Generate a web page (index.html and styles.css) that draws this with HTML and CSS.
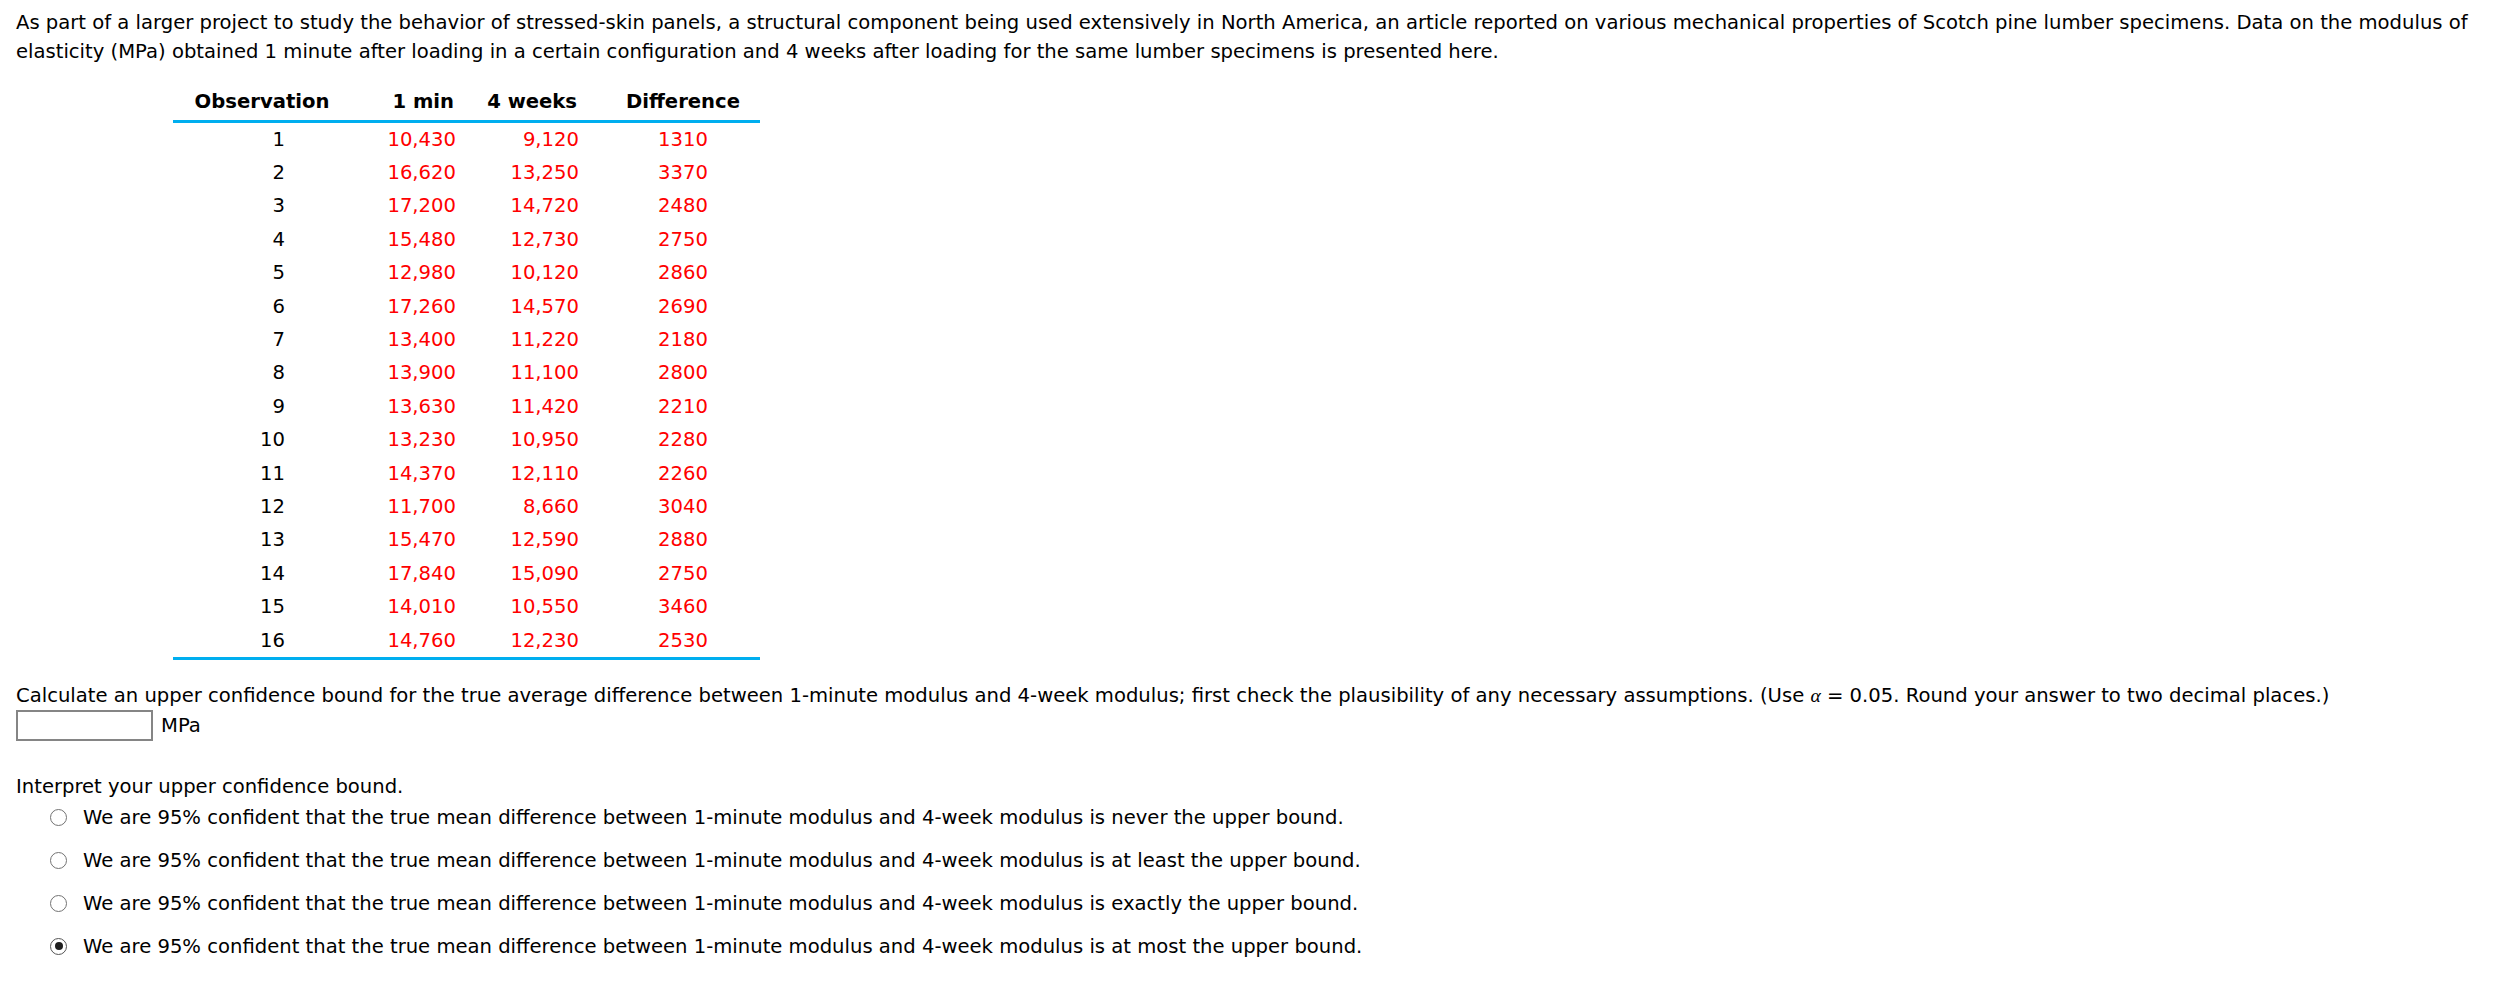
FILE: index.html
```html
<!DOCTYPE html>
<html>
<head>
<meta charset="utf-8">
<link rel="stylesheet" href="styles.css">
</head>
<body>
<div class="page">
  <p class="intro">As part of a larger project to study the behavior of stressed-skin panels, a structural component being used extensively in North America, an article reported on various mechanical properties of Scotch pine lumber specimens. Data on the modulus of elasticity (MPa) obtained 1 minute after loading in a certain configuration and 4 weeks after loading for the same lumber specimens is presented here.</p>

  <table class="data">
    <colgroup>
      <col class="col-obs">
      <col class="col-min">
      <col class="col-wk">
      <col class="col-diff">
    </colgroup>
    <thead>
      <tr>
        <th class="h-obs">Observation</th>
        <th class="h-num">1 min</th>
        <th class="h-num">4 weeks</th>
        <th class="h-diff">Difference</th>
      </tr>
    </thead>
    <tbody>
      <tr><td class="obs">1</td><td class="num">10,430</td><td class="num">9,120</td><td class="diff">1310</td></tr>
      <tr><td class="obs">2</td><td class="num">16,620</td><td class="num">13,250</td><td class="diff">3370</td></tr>
      <tr><td class="obs">3</td><td class="num">17,200</td><td class="num">14,720</td><td class="diff">2480</td></tr>
      <tr><td class="obs">4</td><td class="num">15,480</td><td class="num">12,730</td><td class="diff">2750</td></tr>
      <tr><td class="obs">5</td><td class="num">12,980</td><td class="num">10,120</td><td class="diff">2860</td></tr>
      <tr><td class="obs">6</td><td class="num">17,260</td><td class="num">14,570</td><td class="diff">2690</td></tr>
      <tr><td class="obs">7</td><td class="num">13,400</td><td class="num">11,220</td><td class="diff">2180</td></tr>
      <tr><td class="obs">8</td><td class="num">13,900</td><td class="num">11,100</td><td class="diff">2800</td></tr>
      <tr><td class="obs">9</td><td class="num">13,630</td><td class="num">11,420</td><td class="diff">2210</td></tr>
      <tr><td class="obs">10</td><td class="num">13,230</td><td class="num">10,950</td><td class="diff">2280</td></tr>
      <tr><td class="obs">11</td><td class="num">14,370</td><td class="num">12,110</td><td class="diff">2260</td></tr>
      <tr><td class="obs">12</td><td class="num">11,700</td><td class="num">8,660</td><td class="diff">3040</td></tr>
      <tr><td class="obs">13</td><td class="num">15,470</td><td class="num">12,590</td><td class="diff">2880</td></tr>
      <tr><td class="obs">14</td><td class="num">17,840</td><td class="num">15,090</td><td class="diff">2750</td></tr>
      <tr><td class="obs">15</td><td class="num">14,010</td><td class="num">10,550</td><td class="diff">3460</td></tr>
      <tr><td class="obs">16</td><td class="num">14,760</td><td class="num">12,230</td><td class="diff">2530</td></tr>
    </tbody>
  </table>

  <p class="question">Calculate an upper confidence bound for the true average difference between 1-minute modulus and 4-week modulus; first check the plausibility of any necessary assumptions. (Use <span class="alpha">α</span> = 0.05. Round your answer to two decimal places.)</p>
  <div class="answer">
    <input class="answer-box" type="text" value="">
    <span class="unit">MPa</span>
  </div>

  <p class="interpret">Interpret your upper confidence bound.</p>
  <ul class="choices">
    <li class="choice"><span class="radio"></span><span>We are 95% confident that the true mean difference between 1-minute modulus and 4-week modulus is never the upper bound.</span></li>
    <li class="choice"><span class="radio"></span><span>We are 95% confident that the true mean difference between 1-minute modulus and 4-week modulus is at least the upper bound.</span></li>
    <li class="choice"><span class="radio"></span><span>We are 95% confident that the true mean difference between 1-minute modulus and 4-week modulus is exactly the upper bound.</span></li>
    <li class="choice"><span class="radio checked"></span><span>We are 95% confident that the true mean difference between 1-minute modulus and 4-week modulus is at most the upper bound.</span></li>
  </ul>
</div>
</body>
</html>
```

FILE: styles.css
```css
html, body {
  margin: 0;
  padding: 0;
  background: #ffffff;
}

body {
  font-family: "DejaVu Sans", Verdana, sans-serif;
  font-size: 19.6px;
  line-height: 29px;
  color: #000000;
}

.page {
  padding: 8px 16px 0 16px;
}

.intro {
  margin: 0;
}

/* data table */
.data {
  border-collapse: collapse;
  table-layout: fixed;
  width: 587px;
  margin: 19px 0 0 157px;
}

.col-obs { width: 178px; }
.col-min { width: 132px; }
.col-wk { width: 123px; }
.col-diff { width: 154px; }

.data th {
  font-weight: bold;
  white-space: nowrap;
  padding: 2px 0 3.5px 0;
  line-height: 29px;
  border-bottom: 3px solid #00aeef;
}

.data td {
  height: 33.4px;
  padding: 0;
  line-height: 29px;
  white-space: nowrap;
}

.data tbody tr:last-child td {
  border-bottom: 3px solid #00aeef;
}

.h-obs {
  text-align: center;
}

.h-num {
  text-align: right;
  padding-right: 29px !important;
}

.h-diff {
  text-align: center;
}

.obs {
  text-align: right;
  padding-right: 66px !important;
}

.num {
  text-align: right;
  padding-right: 27px !important;
  color: #ff0000;
}

.diff {
  text-align: center;
  color: #ff0000;
}

/* question */
.question {
  margin: 21px 0 0 0;
}

.alpha {
  font-family: "Liberation Serif", serif;
  font-style: italic;
}

.answer {
  display: flex;
  align-items: center;
  gap: 8px;
  height: 31px;
}

.answer-box {
  box-sizing: border-box;
  width: 137px;
  height: 31px;
  margin: 0;
  border: 2px solid #858585;
  background: #ffffff;
  font: inherit;
}

.interpret {
  margin: 31.5px 0 0 0;
}

.choices {
  list-style: none;
  margin: 2px 0 0 34px;
  padding: 0;
  display: flex;
  flex-direction: column;
  gap: 13.9px;
}

.choice {
  display: flex;
  align-items: center;
  gap: 16px;
  height: 29px;
}

.radio {
  box-sizing: border-box;
  width: 17px;
  height: 17px;
  border: 1.5px solid #737373;
  border-radius: 50%;
  background: #ffffff;
  flex: none;
  display: flex;
  align-items: center;
  justify-content: center;
}

.radio.checked {
  border-color: #555555;
}

.radio.checked::after {
  content: "";
  width: 8px;
  height: 8px;
  border-radius: 50%;
  background: #1e1e1e;
}
```
